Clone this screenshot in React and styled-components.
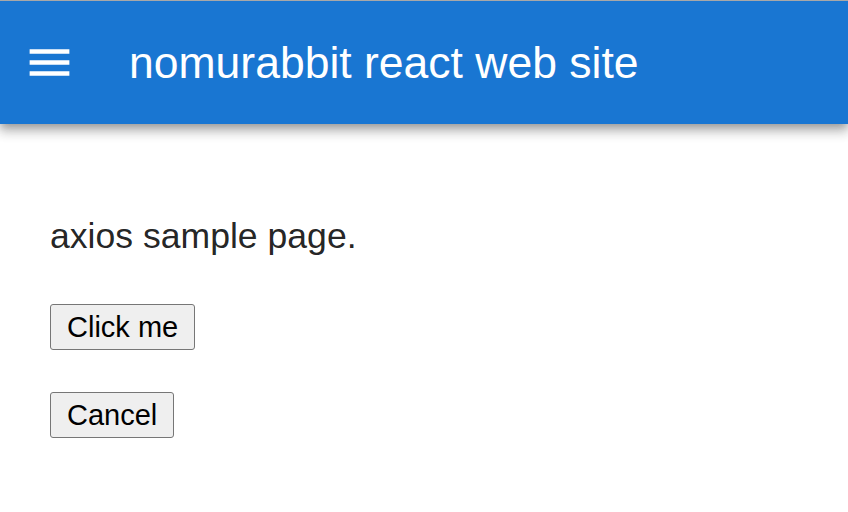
import React from 'react'
import styled, { createGlobalStyle } from 'styled-components'

const GlobalStyle = createGlobalStyle`
  html, body {
    margin: 0;
    padding: 0;
    background: #fff;
  }
  body {
    font-family: "Liberation Sans", Arial, sans-serif;
    border-top: 1px solid #a8a8a8;
  }
`

const Page = styled.div`
  display: flex;
  flex-direction: column;
  min-height: 511px;
`

const AppBar = styled.header`
  display: flex;
  align-items: center;
  height: 123px;
  padding-left: 23px;
  background-color: #1976d2;
  color: #fff;
  box-shadow: 0 4px 8px -2px rgba(0, 0, 0, 0.25), 0 8px 10px 1px rgba(0, 0, 0, 0.14),
    0 3px 14px 2px rgba(0, 0, 0, 0.12);
  position: relative;
  z-index: 1;
`

const MenuButton = styled.button`
  display: flex;
  align-items: center;
  justify-content: center;
  width: 53px;
  height: 53px;
  padding: 0;
  border: none;
  background: transparent;
  color: inherit;
  cursor: pointer;
`

const Title = styled.h6`
  margin: 0 0 0 53px;
  font-size: 44.5px;
  font-weight: 400;
  line-height: 1.15;
`

const Content = styled.main`
  display: flex;
  flex-direction: column;
  align-items: flex-start;
  padding: 92px 50px 0;
`

const Text = styled.p`
  margin: 0 0 48px;
  font-size: 35.6px;
  line-height: 40px;
  color: rgba(0, 0, 0, 0.87);
`

const Button = styled.button`
  height: 46px;
  margin-bottom: ${(props) => (props.last ? '0' : '42px')};
  padding: 0 16px;
  font-family: "Liberation Sans", Arial, sans-serif;
  font-size: 29px;
  color: #000;
  background-color: #efefef;
  border: 1px solid #767676;
  border-radius: 3px;
`

function MenuIcon() {
  return (
    <svg width="53" height="53" viewBox="0 0 24 24" fill="currentColor">
      <path d="M3 18h18v-2H3v2zm0-5h18v-2H3v2zm0-7v2h18V6H3z" />
    </svg>
  )
}

export default function App() {
  return (
    <Page>
      <GlobalStyle />
      <AppBar>
        <MenuButton aria-label="menu">
          <MenuIcon />
        </MenuButton>
        <Title>nomurabbit react web site</Title>
      </AppBar>
      <Content>
        <Text>axios sample page.</Text>
        <Button>Click me</Button>
        <Button last>Cancel</Button>
      </Content>
    </Page>
  )
}
